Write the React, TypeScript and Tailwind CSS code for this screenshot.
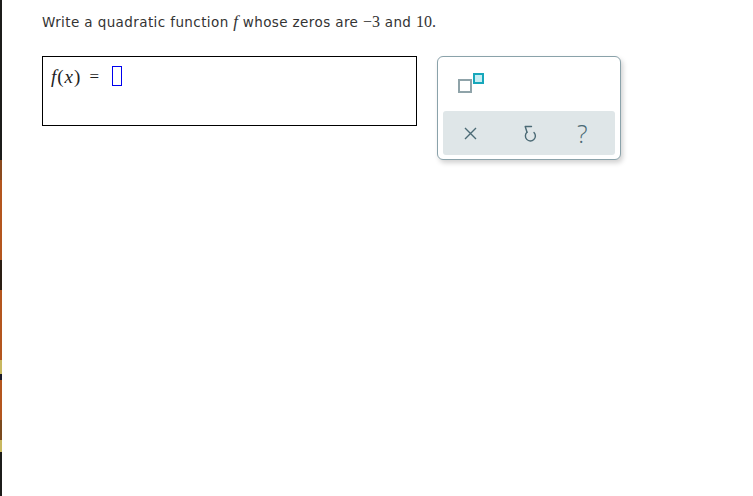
import React from "react";

export default function App() {
  const strip = [
    ["#1c1c1a", 160],
    ["#8a4a1e", 20],
    ["#b4561e", 80],
    ["#2a1e14", 30],
    ["#b4561e", 70],
    ["#c8b860", 14],
    ["#1a1a2a", 6],
    ["#b4561e", 40],
    ["#7a4a1e", 20],
    ["#c8b860", 12],
    ["#1c1c1a", 44],
  ] as const;
  const serif = { fontFamily: '"Liberation Serif", serif' };
  return (
    <div className="flex w-[753px] h-[496px] bg-white overflow-hidden">
      <div className="flex flex-col w-[2px] shrink-0">
        {strip.map(([c, h], i) => (
          <div key={i} style={{ background: c, height: h }} />
        ))}
      </div>
      <div className="flex-1 pl-[40px] pt-[13px]">
        <div
          className="text-[13.5px] tracking-[0.4px] text-[#333] leading-[18px]"
          style={{ fontFamily: '"DejaVu Sans", Verdana, sans-serif' }}
        >
          Write a quadratic function{" "}
          <span className="italic text-[17px] tracking-normal" style={serif}>
            f
          </span>{" "}
          whose zeros are{" "}
          <span className="text-[16px] tracking-normal" style={serif}>
            −3
          </span>{" "}
          and{" "}
          <span className="text-[16px] tracking-normal" style={serif}>
            10.
          </span>
        </div>
        <div className="flex mt-[25px] gap-[20px] items-start">
          <div className="w-[375px] h-[70px] border border-black pl-[8px] pt-[9px]">
            <div className="flex items-center text-[19px] text-[#222] leading-none" style={serif}>
              <span className="italic">f</span>
              <span className="ml-[1px]">(</span>
              <span className="italic ml-[1px]">x</span>
              <span className="ml-[1px]">)</span>
              <span className="ml-[9px] text-[17px]">=</span>
              <span className="ml-[13px] w-[10px] h-[20px] border border-[#0000ee]" />
            </div>
          </div>
          <div className="w-[184px] h-[104px] border border-[#8aa2aa] rounded-[6px] bg-white shadow-[2px_3px_5px_rgba(0,0,0,0.18)] px-[5px] pt-[16px] flex flex-col">
            <div className="relative h-[21px] ml-[15px]">
              <div className="absolute left-0 top-[6px] w-[14px] h-[14px] border-2 border-[#8fa3a9] bg-white" />
              <div className="absolute left-[15px] top-0 w-[11px] h-[11px] border-2 border-[#17a7bb] bg-[#c6eef4]" />
            </div>
            <div className="mt-[17px] h-[44px] bg-[#dfe6e8] rounded-[3px] flex items-center">
              <svg className="ml-[21px]" width="13" height="13" viewBox="0 0 13 13">
                <path d="M1 1L12 12M12 1L1 12" stroke="#4b6a75" strokeWidth="1.4" fill="none" />
              </svg>
              <svg className="ml-[46px]" width="14" height="18" viewBox="0 0 14 18">
                <path
                  d="M4 8.3 A5 5 0 1 0 11 8.5"
                  stroke="#4b6a75"
                  strokeWidth="1.4"
                  fill="none"
                  strokeLinecap="round"
                />
                <path
                  d="M8.5 2.5 L2.2 2.5 L4 8.3"
                  stroke="#4b6a75"
                  strokeWidth="1.4"
                  fill="none"
                  strokeLinejoin="round"
                  strokeLinecap="round"
                />
              </svg>
              <span
                className="ml-[40px] text-[25px] text-[#4b6a75] leading-none"
                style={{ fontFamily: '"Open Sans", sans-serif', fontWeight: 300 }}
              >
                ?
              </span>
            </div>
          </div>
        </div>
      </div>
    </div>
  );
}
